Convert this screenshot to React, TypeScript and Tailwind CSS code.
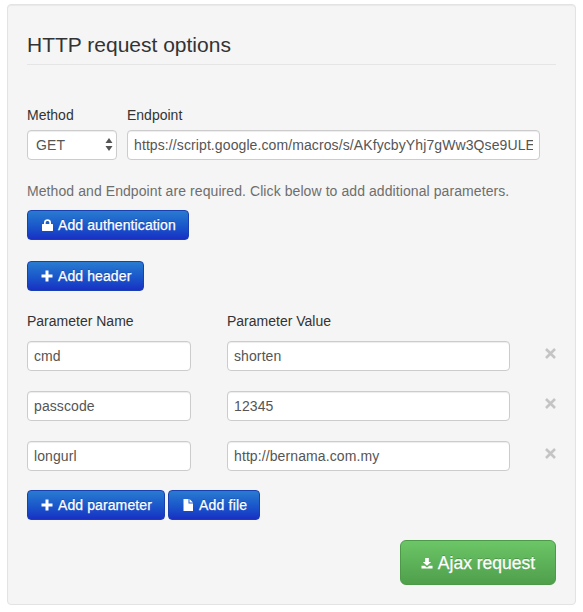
import type { ReactNode } from 'react'

const inputClass =
  'h-[30px] rounded-[4px] border border-[#ccc] bg-white px-[6px] text-[14px] tracking-[0.1px] text-[#555] shadow-[inset_0_1px_1px_rgba(0,0,0,0.075)] outline-none'

const params = [
  { name: 'cmd', value: 'shorten' },
  { name: 'passcode', value: '12345' },
  { name: 'longurl', value: 'http://bernama.com.my' },
]

function PlusIcon() {
  return (
    <svg width="12" height="12" viewBox="0 0 12 12" fill="currentColor">
      <path d="M4.500 0.500h3v4h4v3h-4v4h-3v-4h-4v-3h4z" />
    </svg>
  )
}

function LockIcon() {
  return (
    <svg width="11" height="12" viewBox="0 0 11 12" fill="currentColor">
      <path fillRule="evenodd" d="M2 5V3.500C2 1.500 3.500 0.300 5.500 0.300S9 1.500 9 3.500V5h1.500c.3 0 .5.2.5.5V11.500c0 .3-.2.5-.5.5H.5c-.3 0-.5-.2-.5-.5V5.500c0-.3.2-.5.5-.5H2zM3.700 5h3.600V3.500c0-1-.8-1.600-1.800-1.600S3.700 2.500 3.700 3.500z" />
    </svg>
  )
}

function FileIcon() {
  return (
    <svg width="10" height="12" viewBox="0 0 10 12" fill="currentColor">
      <path d="M0.500 0H5.500V4.500H10V12H0.500z M6.500 0L10 3.500H6.500z" />
    </svg>
  )
}

function DownloadIcon() {
  return (
    <svg width="12" height="12" viewBox="0 0 13 13" fill="currentColor">
      <path d="M4.500 1h4v4.500h2.500L6.500 9.500 2 5.500h2.500z M0.500 9.500H4L6.500 11.500 9 9.500h3.500V12.500H0.500z" />
    </svg>
  )
}

function RemoveIcon() {
  return (
    <svg width="11" height="11" viewBox="0 0 11 11" className="block text-[#c4c4c4]" fill="none" stroke="currentColor" strokeWidth="2.6">
      <path d="M1 1l9 9M10 1l-9 9" />
    </svg>
  )
}

function BlueButton({ icon, children }: { icon: ReactNode; children: ReactNode }) {
  return (
    <button className="flex h-[30px] items-center gap-[4px] rounded-[4px] border border-[#1a3fb0] bg-gradient-to-b from-[#2a7bd0] to-[#1a2fc4] px-[12px] text-[14px] tracking-[0.1px] text-white [-webkit-text-stroke:0.25px_white] [text-shadow:0_-1px_0_rgba(0,0,0,0.2)]">
      <span className="flex w-[14px] justify-center">{icon}</span>
      {children}
    </button>
  )
}

export default function App() {
  return (
    <div className="h-[612px] w-[583px] bg-white px-[7px] pt-[4px] font-['Liberation_Sans',Arial,sans-serif] text-[14px] leading-[20px] text-[#333]">
      <div className="h-[601px] rounded-[4px] border border-[#e3e3e3] bg-[#f5f5f5] px-[19px] pt-[28px] shadow-[inset_0_1px_1px_rgba(0,0,0,0.05)]">
        <h3 className="h-[32px] border-b border-[#e5e5e5] text-[21px] leading-[24px]">HTTP request options</h3>

        <div className="mt-[40px] flex gap-[10px]">
          <div className="flex flex-col gap-[5px]">
            <label>Method</label>
            <div className="relative w-[90px]">
              <select className={`${inputClass} w-full appearance-none pl-[8px] text-[#444]`} defaultValue="GET">
                <option>GET</option>
                <option>POST</option>
              </select>
              <svg width="8" height="13" viewBox="0 0 8 13" fill="#555" className="pointer-events-none absolute right-[4px] top-[8px]">
                <path d="M4 0l3.500 5H0.500z M4 13L0.500 8h7z" />
              </svg>
            </div>
          </div>
          <div className="flex flex-col gap-[5px]">
            <label>Endpoint</label>
            <input
              readOnly
              className={`${inputClass} w-[413px]`}
              value="https://script.google.com/macros/s/AKfycbyYhj7gWw3Qse9ULEx3kd9"
            />
          </div>
        </div>

        <p className="mt-[21px] tracking-[0.08px] text-[#6e6e6e]">Method and Endpoint are required. Click below to add additional parameters.</p>

        <div className="mt-[9px] flex flex-col items-start gap-[21px]">
          <BlueButton icon={<LockIcon />}>Add authentication</BlueButton>
          <BlueButton icon={<PlusIcon />}>Add header</BlueButton>
        </div>

        <div className="mt-[20px] flex gap-[36px]">
          <label className="w-[164px]">Parameter Name</label>
          <label>Parameter Value</label>
        </div>

        <div className="mt-[10px] flex flex-col gap-[20px]">
          {params.map((p) => (
            <div key={p.name} className="flex items-start">
              <input readOnly className={`${inputClass} w-[164px]`} value={p.name} />
              <input readOnly className={`${inputClass} ml-[36px] w-[283px]`} value={p.value} />
              <span className="ml-[34.500px] mt-[7px]">
                <RemoveIcon />
              </span>
            </div>
          ))}
        </div>

        <div className="mt-[19px] flex gap-[3px]">
          <BlueButton icon={<PlusIcon />}>Add parameter</BlueButton>
          <BlueButton icon={<FileIcon />}>
            <span className="tracking-[0.22px]">Add file</span>
          </BlueButton>
        </div>

        <div className="mt-[20px] flex justify-end">
          <button className="flex h-[45px] w-[156px] items-center justify-center gap-[5px] rounded-[6px] border border-[#4c9a48] bg-gradient-to-b from-[#6cc667] to-[#4f9f4b] text-[17.500px] text-white [-webkit-text-stroke:0.25px_white] [text-shadow:0_-1px_0_rgba(0,0,0,0.2)]">
            <DownloadIcon />
            Ajax request
          </button>
        </div>
      </div>
    </div>
  )
}
